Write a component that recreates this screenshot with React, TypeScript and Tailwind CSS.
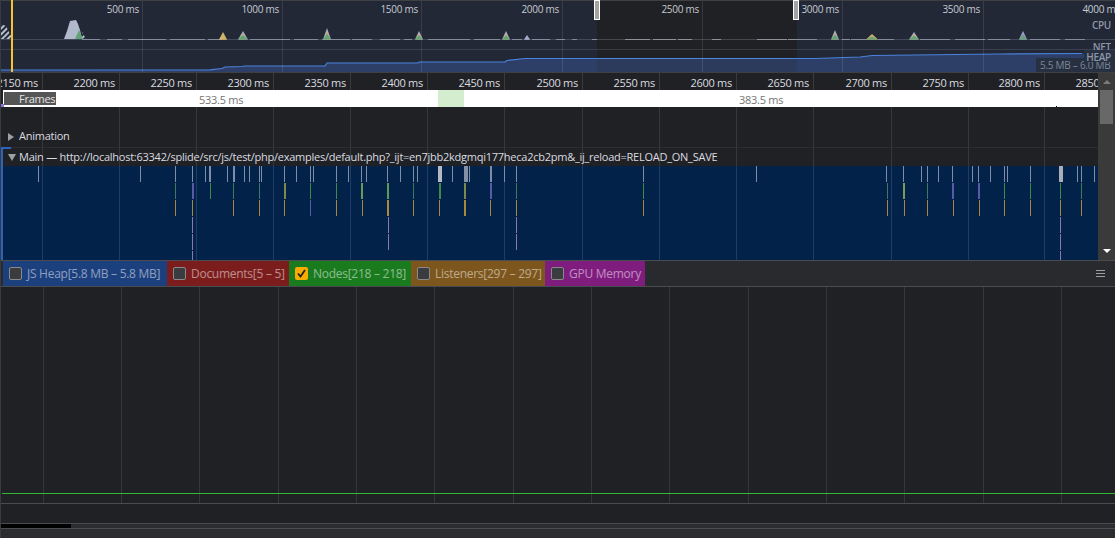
const OVERVIEW_LINES = [142, 282, 421, 562, 702, 842, 983, 1123];
const OVERVIEW_LABELS = ["500 ms", "1000 ms", "1500 ms", "2000 ms", "2500 ms", "3000 ms", "3500 ms", "4000 ms"];
const RULER_LINES = [42, 119, 196, 273, 350, 427, 504, 582, 659, 736, 813, 891, 968, 1044];
const RULER_LABELS = ["2150 ms", "2200 ms", "2250 ms", "2300 ms", "2350 ms", "2400 ms", "2450 ms", "2500 ms", "2550 ms", "2600 ms", "2650 ms", "2700 ms", "2750 ms", "2800 ms", "2850 ms"];
const LOWER_LINES = [43, 121, 199, 278, 356, 434, 513, 591, 669, 748, 826, 904, 983, 1061];

const G = "#3f7a5a";
const O = "#a8873f";
const P = "#8d76b8";
const B = "#5a5aa8";
const L = "#7f8ea8";

// [x, width, colour]
type Tick = [number, number, string];

const ROW_1: Tick[] = [38, 140, 175, 192, 205, 227, 244, 249, 259, 261, 284, 296, 310, 313, 336, 348, 361, 366, 387, 400, 413, 417, 452, 469, 504, 516, 643, 756, 886, 903, 921, 927, 938, 952, 972, 978, 990, 1004, 1007, 1030, 1077, 1081, 1094]
  .map((x): Tick => [x, 1, L])
  .concat([[209, 2, L], [233, 2, L], [438, 4, "#b4bac4"], [464, 4, "#8490a6"], [490, 2, L], [1059, 4, "#a9aeb8"]]);

const ROW_2: Tick[] = [
  [175, 1, G], [192, 2, B], [210, 1, "#3f8a4a"], [233, 1, G], [259, 1, G], [284, 2, "#7d8a4a"], [310, 1, "#3f8a4a"],
  [336, 1, "#3f8a4a"], [361, 2, "#6a9a5a"], [387, 2, "#5a9a5a"], [413, 1, G], [439, 2, "#3f8a4a"], [464, 2, "#7d8a4a"],
  [490, 2, B], [516, 1, G], [643, 1, "#3f8a4a"], [887, 1, G], [903, 2, "#7d9a5a"], [927, 1, G], [952, 2, B],
  [978, 2, B], [1004, 1, "#3f8a4a"], [1030, 1, "#3f8a4a"], [1060, 1, "#3f8a4a"], [1081, 1, G],
];

const ROW_3: Tick[] = [
  [175, 1, O], [192, 1, O], [233, 1, O], [259, 1, O], [284, 1, O], [310, 1, B], [336, 1, O], [362, 1, O],
  [387, 2, O], [413, 1, O], [439, 1, O], [464, 2, O], [490, 1, O], [516, 1, O], [643, 1, O], [887, 1, O],
  [904, 1, O], [927, 1, O], [953, 1, O], [979, 1, O], [1004, 1, O], [1030, 1, O], [1060, 1, O], [1081, 1, O],
];

const ROW_4: Tick[] = [[192, 1, P], [388, 1, P], [516, 1, P], [1060, 1, P]];
const ROW_6: Tick[] = [[192, 1, P], [1060, 1, P]];

const FLAME_ROWS = [
  { top: 0, height: 16, ticks: ROW_1 },
  { top: 17, height: 16, ticks: ROW_2 },
  { top: 34, height: 16, ticks: ROW_3 },
  { top: 51, height: 16, ticks: ROW_4 },
  { top: 68, height: 16, ticks: ROW_4 },
  { top: 85, height: 9, ticks: ROW_6 },
];

const DASHES = [
  [82, 100], [107, 122], [128, 166], [170, 205], [208, 222], [250, 290], [294, 318], [322, 350], [352, 372], [380, 400],
  [404, 412], [428, 470], [474, 500], [512, 522], [532, 550], [556, 565], [572, 577], [592, 597], [625, 650], [653, 676],
  [678, 692], [712, 721], [757, 787], [788, 817], [842, 850], [851, 867], [878, 894], [920, 950], [955, 985], [988, 1010],
  [1030, 1060], [1065, 1085],
];

const TIP = "#b0b0cc";
const YEL = "#e0ba62";
const GRN = "#68a96c";
const PUR = "#a98ac8";

// x, top, half width, tip, middle, base
const PEAKS = [
  [223, 32, 4, YEL, YEL, YEL],
  [243, 31, 5, TIP, YEL, GRN],
  [327, 28, 4, TIP, YEL, GRN],
  [419, 31, 4, TIP, YEL, GRN],
  [506, 31, 4, TIP, YEL, GRN],
  [527, 35, 3, TIP, TIP, TIP],
  [835, 30, 4, TIP, YEL, GRN],
  [872, 34, 6, YEL, YEL, GRN],
  [914, 32, 5, TIP, YEL, GRN],
  [1023, 31, 4, TIP, PUR, GRN],
] as const;

const HEAP_LINE = "0,70 210,69.8 222,68.5 225,67 243,66.5 244,66 325,66 327,63 418,63 419,62 505,62 507,60.5 525,58.5 815,58.5 860,57 872,55.5 1000,54 1082,53.5";

const TABS = [
  { label: "JS Heap", range: "[5.8 MB – 5.8 MB]", width: "w-[164px]", bg: "bg-[#1c3f7e]" },
  { label: "Documents", range: "[5 – 5]", width: "w-[122px]", bg: "bg-[#7c1d1d]" },
  { label: "Nodes", range: "[218 – 218]", width: "w-[122px]", bg: "bg-[#1a7a1e]", checked: true },
  { label: "Listeners", range: "[297 – 297]", width: "w-[134px]", bg: "bg-[#7c561c]" },
  { label: "GPU Memory", range: "", width: "w-[100px]", bg: "bg-[#7f1d7f]" },
];

function GridLines({ lines, className }: { lines: number[]; className: string }) {
  return (
    <>
      {lines.map((x) => (
        <div key={x} className={`absolute top-0 bottom-0 w-px ${className}`} style={{ left: x }} />
      ))}
    </>
  );
}

function OverviewChart() {
  return (
    <svg className="absolute inset-0" width="1115" height="72">
      <defs>
        <pattern id="hatch" width="4" height="4" patternUnits="userSpaceOnUse" patternTransform="rotate(45)">
          <rect width="2" height="4" fill="#c6cad2" />
        </pattern>
      </defs>
      <line x1="0" y1="39.5" x2="1115" y2="39.5" stroke="#45474c" />
      <line x1="0" y1="49.5" x2="1115" y2="49.5" stroke="#3a3c42" />
      <polygon points={`0,72 ${HEAP_LINE} 1115,53.5 1115,72`} fill="#2c3a5c" />
      <polyline points={HEAP_LINE} fill="none" stroke="#4d85e0" strokeWidth="1.2" />
      <path d="M1 39 L1 24 L6 26 L11 36 L13 39 Z" fill="url(#hatch)" />
      <path d="M82 39 L82 32 L86 39 Z" fill="url(#hatch)" />
      <path d="M64 39 L67 31 L70 21 L76 20 L78 24 L80 30 L82 39 Z" fill="#bfc3cc" />
      <path d="M75 39 L79 30 L83 39 Z" fill={GRN} />
      {DASHES.map(([a, b]) => (
        <line key={a} x1={a} y1="39.5" x2={b} y2="39.5" stroke="#8d9096" />
      ))}
      {PEAKS.map(([x, top, half, a, b, c]) => {
        const h = 39 - top;
        return (
          <g key={x}>
            <path d={`M${x - half} 39.5 L${x} ${top} L${x + half} 39.5 Z`} fill={a} />
            <path d={`M${x - half * 0.8} 39.5 L${x} ${top + h * 0.25} L${x + half * 0.8} 39.5 Z`} fill={b} />
            <path d={`M${x - half} 39.5 L${x} ${top + h * 0.5} L${x + half} 39.5 Z`} fill={c} />
          </g>
        );
      })}
    </svg>
  );
}

function Overview() {
  return (
    <div className="relative h-[73px] shrink-0 overflow-hidden border-b border-[#3f4043] bg-[#202124] text-[10px] text-[#c6cad2]">
      <OverviewChart />
      <div className="absolute top-0 bottom-0 left-0 w-[597px] bg-[#3d6ad0]/10" />
      <div className="absolute top-0 bottom-0 left-[797px] right-0 bg-[#3d6ad0]/10" />
      <GridLines lines={OVERVIEW_LINES} className="bg-white/10" />
      <div className="absolute top-0 right-0 left-0 h-px bg-[#3f4043]" />
      {OVERVIEW_LABELS.map((label, i) => (
        <span key={label} className="absolute top-[2px] whitespace-nowrap text-right" style={{ left: OVERVIEW_LINES[i] - 63, width: 60 }}>
          {label}
        </span>
      ))}
      <div className="absolute top-0 bottom-0 left-[11px] w-[2px] bg-[#fbc02d]" />
      <div className="absolute top-0 left-[594px] h-[20px] w-[6px] border border-white bg-[#a3a3a3]" />
      <div className="absolute top-0 left-[793px] h-[20px] w-[6px] border border-white bg-[#a3a3a3]" />
      <span className="absolute top-[18px] right-[4px] font-semibold text-[#8e97a8]">CPU</span>
      <span className="absolute top-[40px] right-[4px] h-[11px] overflow-hidden font-semibold leading-[15px] text-[#8e97a8]">NET</span>
      <div className="absolute top-[58px] right-0 h-[14px] w-[79px] overflow-hidden bg-[#273040] pl-[4px] leading-[14px] whitespace-nowrap text-[#7d8798]">5.5 MB – 6.0 MB</div>
      <span className="absolute top-[50px] right-0 h-[12px] bg-[#273040] pl-[2px] pr-[4px] font-semibold leading-[14px] text-[#8e97a8]">HEAP</span>
    </div>
  );
}

function Ruler() {
  return (
    <div className="relative h-[17px] shrink-0 overflow-hidden bg-[#202124] text-[11px] leading-[19px] text-[#dadce0]">
      {RULER_LABELS.map((label, i) => (
        <span key={label} className="absolute top-0 w-[60px] whitespace-nowrap text-right" style={{ left: (i < 14 ? RULER_LINES[i] : 1121) - 64 }}>
          {label}
        </span>
      ))}
    </div>
  );
}

function Frames() {
  return (
    <div className="relative ml-[3px] h-[17px] shrink-0 bg-white pl-px pt-[2px] text-[11px] text-[#757575]">
      <div className="flex h-[13px] w-[52px] items-center bg-[#555555] pl-[15px] leading-none text-[#e3e3e3]">Frames</div>
      <span className="absolute left-[196px] top-0 leading-[19px]">533.5 ms</span>
      <span className="absolute left-[736px] top-0 leading-[19px]">383.5 ms</span>
      <div className="absolute top-0 bottom-0 left-[435px] w-[26px] bg-[#d4edcf]" />
      <div className="absolute bottom-0 left-[-2px] h-[3px] w-[3px] bg-[#8d76e0]" />
      <div className="absolute bottom-0 left-[1053px] h-[1px] w-px bg-black" />
    </div>
  );
}

function FlameChart() {
  return (
    <div className="relative min-h-0 flex-1 overflow-hidden bg-[#03224a]">
      <GridLines lines={RULER_LINES} className="bg-[#1f3c66]" />
      {FLAME_ROWS.map((row) => (
        <div key={row.top} className="absolute right-0 left-0" style={{ top: row.top, height: row.height }}>
          {row.ticks.map(([x, w, c]) => (
            <div key={x} className="absolute top-0 bottom-0" style={{ left: x, width: w, background: c }} />
          ))}
        </div>
      ))}
    </div>
  );
}

function TrackHeader({ title, open }: { title: string; open?: boolean }) {
  return (
    <div className={`relative flex items-center pl-[8px] text-[11px] tracking-[-0.25px] text-[#dadce0] ${open ? "h-[18px]" : "h-[19px]"}`}>
      <span className={open ? "mr-[3px] h-0 w-0 border-x-[4px] border-t-[7px] border-x-transparent border-t-[#9aa0a6]" : "mr-[5px] h-0 w-0 border-y-[4px] border-l-[6px] border-y-transparent border-l-[#9aa0a6]"} />
      <span className="whitespace-nowrap">{title}</span>
    </div>
  );
}

function Timeline() {
  return (
    <div className="flex h-[187px] shrink-0">
      <div className="relative flex w-[1098px] flex-col">
        <Ruler />
        <Frames />
        <div className="relative flex min-h-0 flex-1 flex-col bg-[#202124]">
          {RULER_LINES.map((x) => (
            <div key={x} className="absolute top-0 h-[59px] w-px bg-[#36373a]" style={{ left: x }} />
          ))}
          <div className="h-[20px] shrink-0" />
          <TrackHeader title="Animation" />
          <div className="mt-[1px] border-t border-[#2d2e31]" />
          <TrackHeader title="Main — http://localhost:63342/splide/src/js/test/php/examples/default.php?_ijt=en7jbb2kdgmqi177heca2cb2pm&_ij_reload=RELOAD_ON_SAVE" open />
          <FlameChart />
        </div>
        {RULER_LINES.map((x) => (
          <div key={x} className="absolute top-0 h-[17px] w-px bg-[#3a3b3e]" style={{ left: x }} />
        ))}
        <div className="absolute top-[74px] left-[1px] h-[113px] w-[2px] bg-[#2a63c0]" />
        <div className="absolute top-[74px] left-[1px] h-[2px] w-[10px] bg-[#2a63c0]" />
      </div>
      <Scrollbar />
    </div>
  );
}

function Scrollbar() {
  return (
    <div className="flex w-[17px] flex-col items-center bg-[#3a3a3a]">
      <span className="mt-[7px] h-0 w-0 border-x-[4px] border-b-[4px] border-x-transparent border-b-[#7a7a7a]" />
      <div className="mt-[6px] h-[34px] w-[13px] bg-[#686868]" />
      <span className="mt-auto mb-[7px] h-0 w-0 border-x-[4px] border-t-[4px] border-x-transparent border-t-white" />
    </div>
  );
}

function Tabs() {
  return (
    <div className="flex h-[27px] shrink-0 border-y border-[#494c50] bg-[#292a2d] pl-[3px] text-xs text-white/50">
      {TABS.map((tab) => (
        <div key={tab.label} className={`flex items-center pl-[6px] whitespace-nowrap ${tab.width} ${tab.bg}`}>
          {tab.checked ? (
            <span className="mr-[5px] flex h-[13px] w-[13px] shrink-0 items-center justify-center rounded-[2px] bg-[#f9ab00]">
              <svg width="11" height="11" viewBox="0 0 11 11">
                <path d="M2 5.5 L4.5 8.5 L9 2" fill="none" stroke="#202124" strokeWidth="1.8" />
              </svg>
            </span>
          ) : (
            <span className="mr-[5px] h-[13px] w-[13px] shrink-0 rounded-[2px] border border-[#8a8a8a] bg-[#3b3c3f]" />
          )}
          {tab.label}
          {tab.range}
        </div>
      ))}
      <div className="ml-auto mr-[10px] flex flex-col justify-center gap-[2px]">
        <div className="h-px w-[9px] bg-[#a0a0a0]" />
        <div className="h-px w-[9px] bg-[#a0a0a0]" />
        <div className="h-px w-[9px] bg-[#a0a0a0]" />
      </div>
    </div>
  );
}

function CountersPanel() {
  return (
    <div className="flex min-h-0 flex-1 flex-col bg-[#202124]">
      <div className="relative h-[217px] shrink-0 border-b border-[#494c50]">
        <GridLines lines={LOWER_LINES} className="bg-[#36373a]" />
        <div className="absolute top-[206px] right-0 left-[2px] h-px bg-[#32b832]" />
      </div>
      <div className="h-[19px] shrink-0" />
      <div className="h-[6px] shrink-0 border-y border-[#494c50] bg-[#2b2c2f] pl-px">
        <div className="h-full w-[70px] bg-black" />
      </div>
      <div className="min-h-0 flex-1 bg-[#2b2c30]" />
    </div>
  );
}

export default function App() {
  return (
    <div className="relative flex h-[538px] w-[1115px] flex-col overflow-hidden bg-[#202124] font-['Open_Sans','Noto_Sans',sans-serif] tracking-[-0.27px]">
      <Overview />
      <Timeline />
      <Tabs />
      <CountersPanel />
      <div className="absolute top-0 bottom-0 left-0 w-px bg-[#3a3b3e]" />
    </div>
  );
}
